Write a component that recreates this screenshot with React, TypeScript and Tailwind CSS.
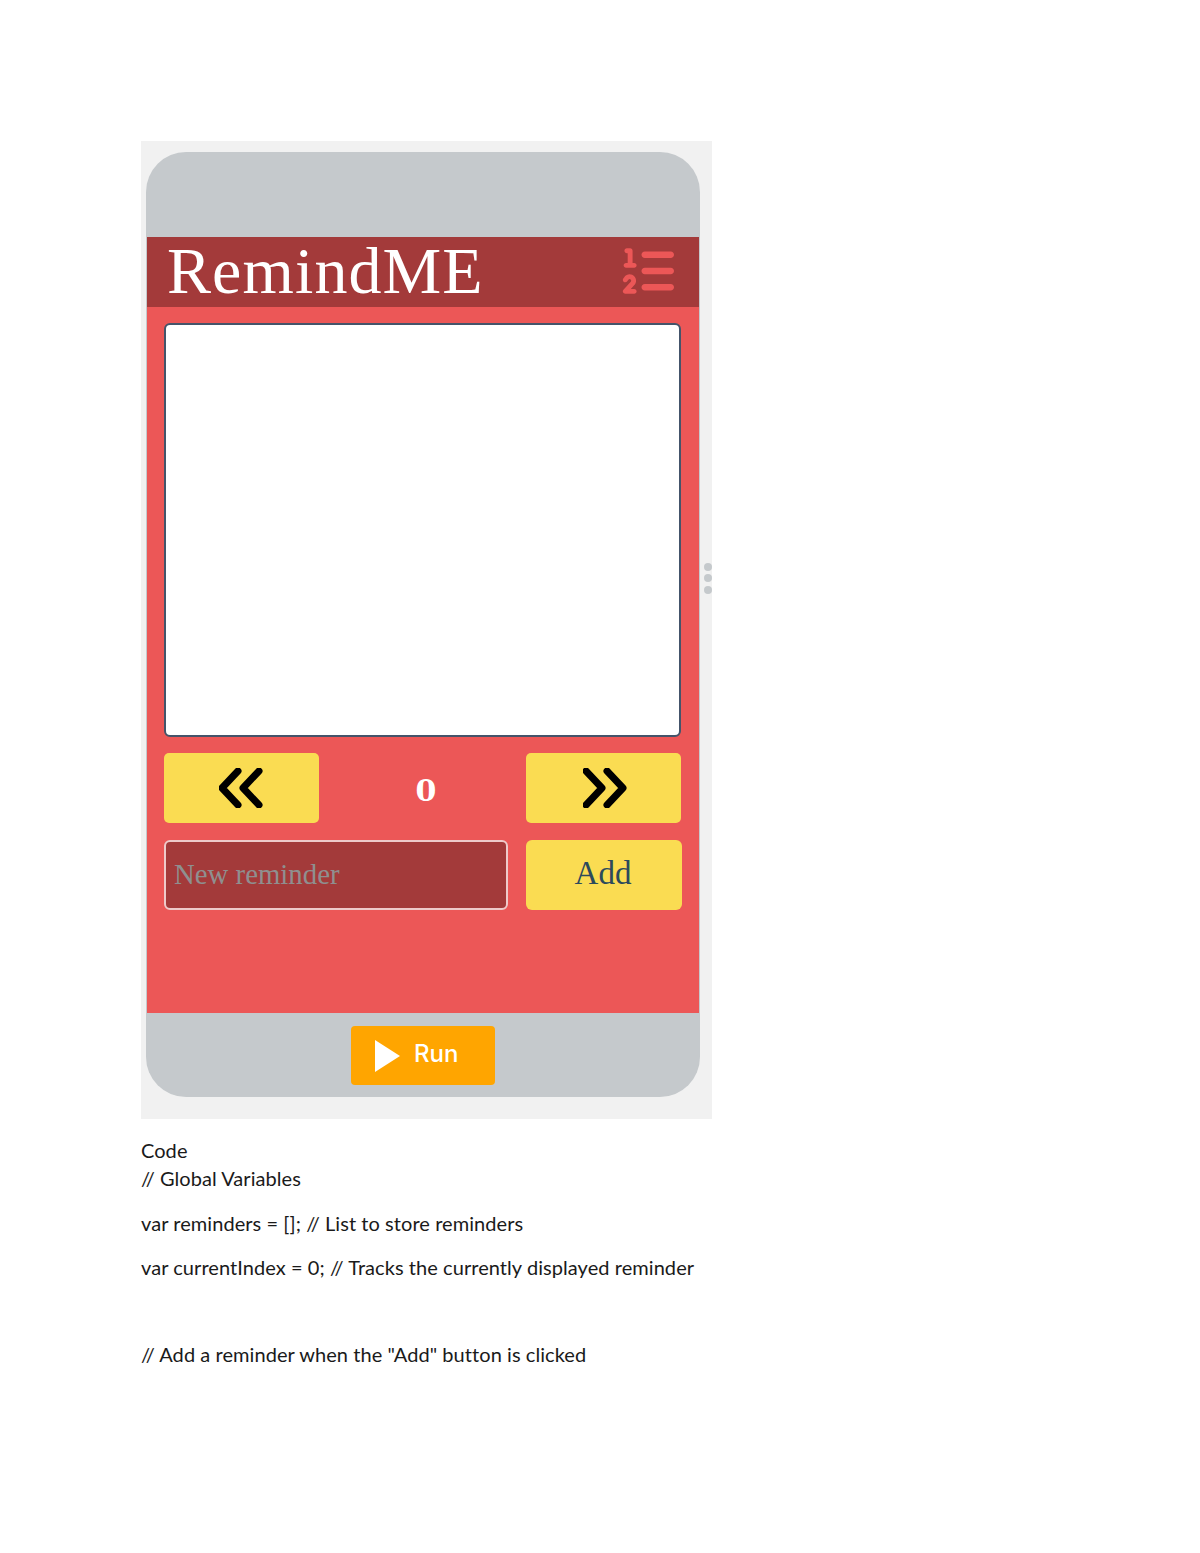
import { FaListOl } from 'react-icons/fa6';

function DoubleChevron({ direction }: { direction: 'left' | 'right' }) {
    const paths = direction === 'left'
        ? 'M238 3 L222 20 L238 37 M259 3 L243 20 L259 37'
        : 'M222 3 L238 20 L222 37 M243 3 L259 20 L243 37';
    return (
        <svg width="44" height="40" viewBox="219 0 44 40" fill="none" stroke="#000" strokeWidth="7" strokeLinecap="round" strokeLinejoin="round">
            <path d={paths} />
        </svg>
    );
}

function Phone() {
    return (
        <div className="w-[554px] h-[945px] rounded-[40px] bg-[#c5c9cc] px-px flex flex-col">
            <div className="h-[85px] shrink-0" />
            <div className="h-[776px] shrink-0 bg-[#ec5757] flex flex-col">
                <div className="h-[70px] shrink-0 bg-[#a33a3a] flex items-center justify-between pl-[20px] pr-[25px]">
                    <span className="font-['Liberation_Serif',serif] text-[66px] leading-none tracking-[1.1px] text-white pb-[3px]">RemindME</span>
                    <FaListOl className="text-[#ec5757] w-[52px] h-[52px] mb-[2px]" />
                </div>
                <div className="pl-[17px] pr-[17px] pt-[16px] flex flex-col">
                    <div className="w-[517px] h-[414px] bg-white rounded-[6px] border-2 border-[#44546a]" />
                    <div className="w-[517px] mt-[16px] h-[70px] flex justify-between items-center">
                        <button className="w-[155px] h-[70px] bg-[#fadc52] rounded-[5px] flex items-center justify-center pb-[1px] pr-[2px]">
                            <DoubleChevron direction="left" />
                        </button>
                        <span className="font-['DejaVu_Serif',serif] font-bold text-[30px] leading-none text-white pt-[6px] pl-[7px]">0</span>
                        <button className="w-[155px] h-[70px] bg-[#fadc52] rounded-[5px] flex items-center justify-center pb-[1px] pl-[2px]">
                            <DoubleChevron direction="right" />
                        </button>
                    </div>
                    <div className="mt-[17px] h-[70px] flex justify-between">
                        <div className="w-[344px] h-[70px] bg-[#a33a3a] rounded-[6px] border-2 border-[#eecaca] flex items-center pl-[8px] font-['Liberation_Serif',serif] text-[28.8px] text-[#8f8f8f]">
                            New reminder
                        </div>
                        <button className="w-[156px] h-[70px] bg-[#fadc52] rounded-[6px] font-['Liberation_Serif',serif] text-[33px] text-[#2c4a5c] pr-[2px] pb-[2px]">
                            Add
                        </button>
                    </div>
                </div>
            </div>
            <div className="flex justify-center pt-[13px]">
                <button className="w-[144px] h-[59px] bg-[#ffa500] rounded-[4px] flex items-center pl-[24px] gap-[14px]">
                    <svg width="25" height="32" viewBox="0 0 25 32" fill="#fff">
                        <path d="M0 0 L25 16 L0 32 Z" />
                    </svg>
                    <span className="font-['Inter',sans-serif] font-medium text-[24px] leading-none text-white pb-[3px]">Run</span>
                </button>
            </div>
        </div>
    );
}

export default function App() {
    return (
        <div className="w-[1200px] h-[1553px] bg-white pt-[141px] pl-[141px] overflow-hidden">
            <div className="relative w-[571px] h-[978px] bg-[#f1f1f1] pl-[5px] pt-[11px] overflow-hidden">
                <Phone />
                <div className="absolute right-0 top-[422px] flex flex-col gap-[3px]">
                    <div className="w-[8px] h-[8px] rounded-full bg-[#c5c9cc]" />
                    <div className="w-[8px] h-[8px] rounded-full bg-[#c5c9cc]" />
                    <div className="w-[8px] h-[8px] rounded-full bg-[#c5c9cc] mt-[1px]" />
                </div>
            </div>
            <div className="mt-[17px] font-['Lato',sans-serif] text-[20px] leading-[28px] tracking-[0.06px] text-[#1a1a1a]">
                <p>Code</p>
                <p>// Global Variables</p>
                <p className="mt-[17px]">var reminders = []; // List to store reminders</p>
                <p className="mt-[16px]">var currentIndex = 0; // Tracks the currently displayed reminder</p>
                <p className="mt-[59px]">// Add a reminder when the "Add" button is clicked</p>
            </div>
        </div>
    );
}
